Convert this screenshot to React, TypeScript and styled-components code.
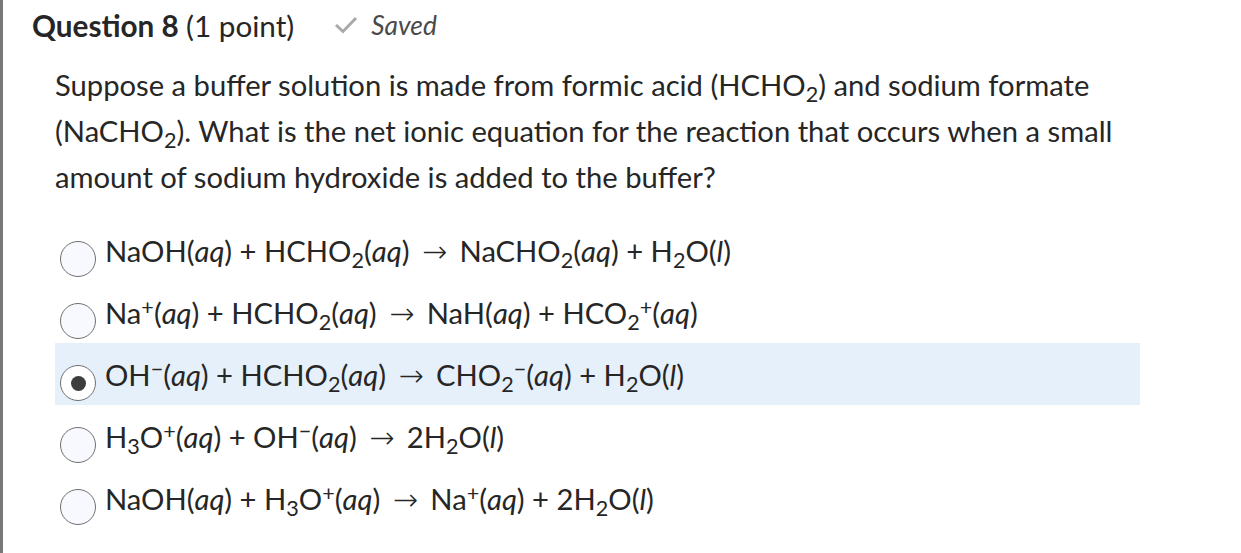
import React from "react"
import styled, { createGlobalStyle } from "styled-components"

const GlobalStyle = createGlobalStyle`
  html, body {
    margin: 0;
    padding: 0;
    background: #fff;
  }
  body {
    font-family: Lato, "Liberation Sans", sans-serif;
    color: #262626;
  }
`

const Page = styled.div`
  height: 553px;
  border-left: 3px solid #787878;
  box-sizing: border-box;
  overflow: hidden;
`

const Header = styled.div`
  display: flex;
  align-items: center;
  height: 50px;
  padding-left: 29px;
`

const Title = styled.h2`
  margin: 0;
  font-size: 29.7px;
  font-weight: 700;
  color: #262626;
`

const Points = styled.span`
  font-weight: 400;
`

const SavedTag = styled.div`
  display: flex;
  align-items: center;
  gap: 13px;
  margin-left: 40px;
  font-size: 26.3px;
  font-style: italic;
  color: #4a4a4a;
`

const Body = styled.div`
  padding: 12px 0 0 52px;
`

const Prompt = styled.p`
  margin: 0;
  font-size: 29.2px;
  line-height: 46px;
  max-width: 1075px;
`

const Options = styled.div`
  display: flex;
  flex-direction: column;
  margin-top: 19px;
  width: 1085px;
`

const Row = styled.label<{ $selected?: boolean }>`
  display: flex;
  align-items: center;
  gap: 9px;
  height: 62px;
  padding-left: 5px;
  background: ${p => (p.$selected ? "#e6f0fa" : "transparent")};
  font-size: 29.2px;
`

const Radio = styled.span<{ $checked?: boolean }>`
  flex: none;
  position: relative;
  width: 36px;
  height: 36px;
  margin-top: 18px;
  border-radius: 50%;
  border: 1px solid #707070;
  box-sizing: border-box;
  background: ${p => (p.$checked ? "#fff" : "#f8f9fe")};

  &::after {
    content: "";
    display: ${p => (p.$checked ? "block" : "none")};
    position: absolute;
    left: 50%;
    top: 50%;
    width: 15px;
    height: 15px;
    margin: -7.5px 0 0 -7.5px;
    border-radius: 50%;
    background: #3d3d3d;
  }
`

const Sub = styled.sub`
  font-size: 0.74em;
  vertical-align: -0.28em;
  line-height: 0;
`

const Sup = styled.sup`
  font-size: 0.74em;
  vertical-align: 0.42em;
  line-height: 0;
`

const I = styled.i`
  font-style: italic;
`

const Arrow = styled.span`
  font-family: "DejaVu Sans", sans-serif;
  font-size: 30px;
  font-weight: 200;
  line-height: 0;
  margin: 0 5px;
`

const aq = <>(<I>aq</I>)</>
const liq = <>(<I>l</I>)</>
const arrow = <Arrow>→</Arrow>

const CheckIcon = () => (
  <svg width="24" height="18" viewBox="0 0 24 18">
    <polyline
      points="2,9 9,15.5 22,2"
      fill="none"
      stroke="#a9a9a9"
      strokeWidth="3"
    />
  </svg>
)

const choices: { id: number; eq: React.ReactNode }[] = [
  {
    id: 1,
    eq: (
      <>
        NaOH{aq} + HCHO<Sub>2</Sub>{aq} {arrow} NaCHO<Sub>2</Sub>{aq} + H<Sub>2</Sub>O{liq}
      </>
    ),
  },
  {
    id: 2,
    eq: (
      <>
        Na<Sup>+</Sup>{aq} + HCHO<Sub>2</Sub>{aq} {arrow} NaH{aq} + HCO<Sub>2</Sub>
        <Sup>+</Sup>{aq}
      </>
    ),
  },
  {
    id: 3,
    eq: (
      <>
        OH<Sup>−</Sup>{aq} + HCHO<Sub>2</Sub>{aq} {arrow} CHO<Sub>2</Sub>
        <Sup>−</Sup>{aq} + H<Sub>2</Sub>O{liq}
      </>
    ),
  },
  {
    id: 4,
    eq: (
      <>
        H<Sub>3</Sub>O<Sup>+</Sup>{aq} + OH<Sup>−</Sup>{aq} {arrow} 2H<Sub>2</Sub>O{liq}
      </>
    ),
  },
  {
    id: 5,
    eq: (
      <>
        NaOH{aq} + H<Sub>3</Sub>O<Sup>+</Sup>{aq} {arrow} Na<Sup>+</Sup>{aq} + 2H
        <Sub>2</Sub>O{liq}
      </>
    ),
  },
]

export default function App() {
  const selected = 3

  return (
    <Page>
      <GlobalStyle />
      <Header>
        <Title>
          Question 8 <Points>(1 point)</Points>
        </Title>
        <SavedTag>
          <CheckIcon />
          Saved
        </SavedTag>
      </Header>
      <Body>
        <Prompt>
          Suppose a buffer solution is made from formic acid (HCHO<Sub>2</Sub>) and sodium
          formate (NaCHO<Sub>2</Sub>). What is the net ionic equation for the reaction that
          occurs when a small amount of sodium hydroxide is added to the buffer?
        </Prompt>
        <Options>
          {choices.map(c => (
            <Row key={c.id} $selected={c.id === selected}>
              <Radio $checked={c.id === selected} />
              <span>{c.eq}</span>
            </Row>
          ))}
        </Options>
      </Body>
    </Page>
  )
}
